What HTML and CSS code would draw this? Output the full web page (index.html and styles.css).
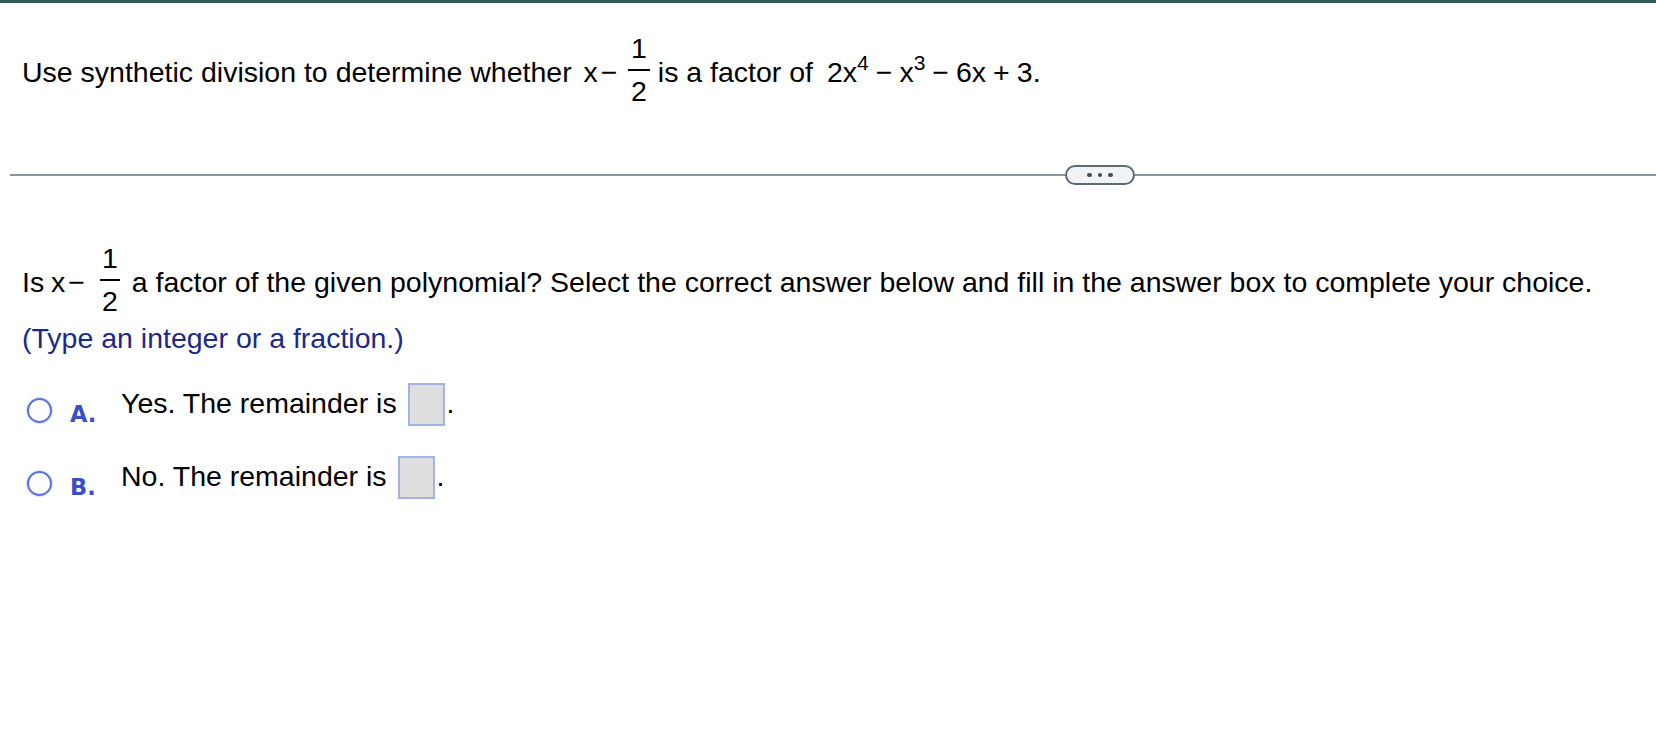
FILE: index.html
```html
<!DOCTYPE html>
<html lang="en">
<head>
<meta charset="utf-8">
<title>Synthetic division</title>
<link rel="stylesheet" href="styles.css">
</head>
<body>
<div class="topbar"></div>
<main class="page">
  <section class="question">
    <p class="stem">Use synthetic division to determine whether <span class="math math-lead">x<span class="op">−</span><span class="frac"><span class="num">1</span><span class="den">2</span></span></span> is a factor of <span class="math poly">2x<sup>4</sup><span class="op op-wide">−</span>x<sup>3</sup><span class="op op-wide">−</span>6x<span class="op op-wide">+</span>3</span>.</p>
  </section>

  <div class="divider">
    <span class="rule rule-left"></span>
    <button class="more" type="button" aria-label="More"><span class="dot"></span><span class="dot"></span><span class="dot"></span></button>
    <span class="rule rule-right"></span>
  </div>

  <section class="answer">
    <p class="prompt">Is <span class="math math-tight">x<span class="op">−</span><span class="frac frac-wide"><span class="num">1</span><span class="den">2</span></span></span> a factor of the given polynomial? Select the correct answer below and fill in the answer box to complete your choice.</p>
    <p class="hint">(Type an integer or a fraction.)</p>
    <ul class="options">
      <li class="option">
        <span class="radio"></span>
        <span class="letter">A.</span>
        <span class="choice">Yes. The remainder is <span class="box"></span>.</span>
      </li>
      <li class="option">
        <span class="radio"></span>
        <span class="letter">B.</span>
        <span class="choice">No. The remainder is <span class="box"></span>.</span>
      </li>
    </ul>
  </section>
</main>
</body>
</html>
```

FILE: styles.css
```css
html, body {
  margin: 0;
  padding: 0;
  background: #ffffff;
}

body {
  width: 1656px;
  height: 748px;
  overflow: hidden;
  font-family: "Liberation Sans", Arial, Helvetica, sans-serif;
  font-size: 28.5px;
  color: #000000;
}

.topbar {
  height: 3px;
  background: #335c5f;
}

.question {
  padding: 31.4px 0 0 22px;
}

p {
  margin: 0;
  line-height: 32px;
  white-space: nowrap;
}

.math-lead {
  margin-left: 4px;
}

.math-tight {
  margin-left: -1px;
}

.poly {
  margin-left: 6px;
}

.op {
  margin: 0 3px;
}

.op-wide {
  margin: 0 7px;
}

.frac {
  display: inline-flex;
  flex-direction: column;
  vertical-align: 23.7px;
  margin-left: 7.5px;
}

.frac-wide {
  margin-left: 12px;
  margin-right: 4px;
}

.num {
  line-height: 28px;
  text-align: center;
  padding: 0 3px 4px;
}

.frac-wide .num {
  padding-left: 2px;
  padding-right: 2px;
}

.den {
  line-height: 28px;
  text-align: center;
  margin-top: 2.5px;
  padding-top: 6px;
  border-top: 2px solid #000000;
}

sup {
  font-size: 21px;
  line-height: 0;
  vertical-align: 12px;
}

.divider {
  display: flex;
  align-items: center;
  margin: 60px 0 0 10px;
}

.rule {
  height: 2px;
  background: #8a93a3;
}

.rule-left {
  width: 1055px;
}

.rule-right {
  flex: 1;
}

.more {
  box-sizing: border-box;
  width: 70px;
  height: 20px;
  padding: 0;
  border: 2px solid #5e6a78;
  border-radius: 10px;
  background: #f2f3f5;
  display: flex;
  align-items: center;
  justify-content: center;
  gap: 6px;
}

.dot {
  width: 4.5px;
  height: 4.5px;
  border-radius: 50%;
  background: #444c59;
}

.answer {
  padding: 59.4px 0 0 22px;
}

.hint {
  margin-top: 7px;
  color: #1b2a8a;
}

.options {
  list-style: none;
  margin: 28.9px 0 0 0;
  padding: 0 0 0 5px;
  display: flex;
  flex-direction: column;
  gap: 30px;
}

.option {
  display: flex;
  align-items: flex-start;
  height: 43px;
}

.radio {
  box-sizing: border-box;
  width: 25px;
  height: 25px;
  margin-top: 15px;
  border: 2.5px solid #5f73d4;
  border-radius: 50%;
  background: #ffffff;
  box-shadow: 0 0 1px 1px rgba(150, 165, 225, 0.35);
  flex: none;
}

.letter {
  width: 51px;
  margin-left: 18px;
  margin-top: 18.9px;
  font-family: "DejaVu Sans", "Liberation Sans", Arial, sans-serif;
  font-weight: bold;
  font-size: 22.5px;
  line-height: 24px;
  color: #3b4fc4;
  flex: none;
}

.choice {
  line-height: 32px;
  white-space: nowrap;
}

.box {
  display: inline-block;
  box-sizing: border-box;
  width: 37px;
  height: 43px;
  margin: 0 2px 0 3px;
  border: 2px solid #a3b3e3;
  background: #dedede;
  vertical-align: -13px;
}
```
